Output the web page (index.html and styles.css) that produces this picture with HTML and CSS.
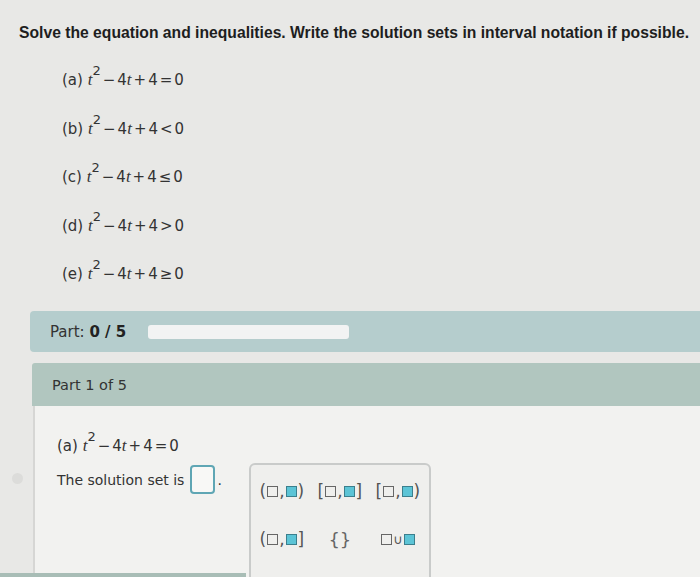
FILE: index.html
```html
<!DOCTYPE html>
<html>
<head>
<meta charset="utf-8">
<link rel="stylesheet" href="styles.css">
</head>
<body>
<div class="page">
  <div class="title">Solve the equation and inequalities. Write the solution sets in interval notation if possible.</div>
  <div class="items">
    <div class="item">(a) <span class="v">t</span><sup>2</sup><span class="op">−</span>4<span class="v">t</span><span class="op">+</span>4<span class="op">=</span>0</div>
    <div class="item">(b) <span class="v">t</span><sup>2</sup><span class="op">−</span>4<span class="v">t</span><span class="op">+</span>4<span class="op">&lt;</span>0</div>
    <div class="item">(c) <span class="v">t</span><sup>2</sup><span class="op">−</span>4<span class="v">t</span><span class="op">+</span>4<span class="op">≤</span>0</div>
    <div class="item">(d) <span class="v">t</span><sup>2</sup><span class="op">−</span>4<span class="v">t</span><span class="op">+</span>4<span class="op">&gt;</span>0</div>
    <div class="item">(e) <span class="v">t</span><sup>2</sup><span class="op">−</span>4<span class="v">t</span><span class="op">+</span>4<span class="op">≥</span>0</div>
  </div>
  <div class="partbar">
    <span class="partlabel">Part: <b>0 / 5</b></span>
    <span class="progress"></span>
  </div>
  <div class="part1">Part 1 of 5</div>
  <div class="lower">
    <div class="side"><span class="dot"></span></div>
    <div class="panel">
      <div class="item q">(a) <span class="v">t</span><sup>2</sup><span class="op">−</span>4<span class="v">t</span><span class="op">+</span>4<span class="op">=</span>0</div>
      <div class="answer">
        <div class="sol">The solution set is <span class="inbox"></span>.</div>
        <div class="keypad">
          <div class="key">(<span class="sq"></span>,<span class="sq f"></span>)</div>
          <div class="key">[<span class="sq"></span>,<span class="sq f"></span>]</div>
          <div class="key">[<span class="sq"></span>,<span class="sq f"></span>)</div>
          <div class="key">(<span class="sq"></span>,<span class="sq f"></span>]</div>
          <div class="key br">{}</div>
          <div class="key un"><span class="sq"></span>∪<span class="sq f"></span></div>
        </div>
      </div>
    </div>
  </div>
  <div class="bottombar"></div>
</div>
</body>
</html>
```
FILE: styles.css
```css
html, body {
  margin: 0;
  padding: 0;
}
body {
  width: 700px;
  height: 577px;
  overflow: hidden;
  background: #e8e8e6;
  font-family: "DejaVu Sans", Verdana, sans-serif;
  color: #2e2e2e;
}
.page {
  position: relative;
  height: 577px;
  display: flex;
  flex-direction: column;
}
.title {
  font-family: "Liberation Sans", Arial, sans-serif;
  font-weight: bold;
  font-size: 15.7px;
  padding: 22px 0 0 19px;
  height: 20px;
  line-height: 21px;
  color: #1e1e1e;
  white-space: nowrap;
}
.items {
  padding: 28px 0 0 62px;
  display: flex;
  flex-direction: column;
  gap: 28.5px;
}
.item {
  font-size: 15px;
  height: 20px;
  line-height: 20px;
  color: #333;
  white-space: nowrap;
}
.item .v {
  font-family: "Liberation Serif", serif;
  font-style: italic;
  font-size: 17px;
}
.item sup {
  font-size: 13px;
  position: relative;
  top: -4px;
  margin-left: 0;
  vertical-align: super;
  line-height: 0;
}
.item .op {
  margin: 0 2px;
}
.partbar {
  margin: 27px 0 0 30px;
  height: 41px;
  flex: none;
  background: #b5cdcd;
  border-radius: 4px 0 0 4px;
  display: flex;
  align-items: center;
  padding-left: 20px;
  gap: 22px;
}
.partlabel {
  font-size: 15px;
  color: #333;
}
.partlabel b {
  color: #222;
}
.progress {
  width: 201px;
  height: 14px;
  background: #f2f3f3;
  border-radius: 3px;
}
.part1 {
  margin: 11px 0 0 32px;
  height: 43px;
  flex: none;
  background: #b1c6bf;
  display: flex;
  align-items: center;
  padding-left: 20px;
  font-size: 14.5px;
  color: #333;
  border-radius: 3px 0 0 0;
}
.lower {
  flex: 1;
  display: flex;
}
.side {
  width: 33px;
  position: relative;
}
.dot {
  position: absolute;
  left: 12px;
  top: 67px;
  width: 11px;
  height: 11px;
  border-radius: 50%;
  background: #dcdcda;
}
.panel {
  flex: 1;
  background: #f2f2f0;
  border-left: 2px solid #d6d6d4;
  padding: 30px 0 0 22px;
}
.answer {
  display: flex;
  align-items: flex-start;
  margin-top: 7px;
}
.sol {
  font-size: 14px;
  color: #333;
  display: flex;
  align-items: center;
  height: 29px;
  padding-top: 2px;
}
.inbox {
  display: inline-block;
  width: 21px;
  height: 25px;
  border: 2px solid #5fa6b4;
  border-radius: 4px;
  margin-left: 6px;
  margin-right: 2px;
  background: #f8f8f6;
}
.keypad {
  margin-left: 27px;
  width: 182px;
  height: 130px;
  border: 2px solid #c9cbca;
  border-radius: 6px;
  background: #efefed;
  display: grid;
  grid-template-columns: repeat(3, 58px);
  grid-template-rows: 48px 48px;
  padding-top: 2px;
  padding-left: 2px;
  box-sizing: border-box;
}
.key {
  display: flex;
  align-items: center;
  justify-content: center;
  font-size: 17px;
  color: #555;
}
.key .sq {
  display: inline-block;
  width: 9px;
  height: 9px;
  border: 1.5px solid #666;
  margin: 0 1px;
}
.key .sq.f {
  background: #5cc4d6;
  border-color: #3b7f8d;
}
.key.br {
  font-size: 18px;
  color: #666;
}
.key.un {
  font-size: 13px;
}
.bottombar {
  position: absolute;
  left: 0;
  bottom: 0;
  width: 246px;
  height: 4px;
  background: #a8bdb6;
}
```
